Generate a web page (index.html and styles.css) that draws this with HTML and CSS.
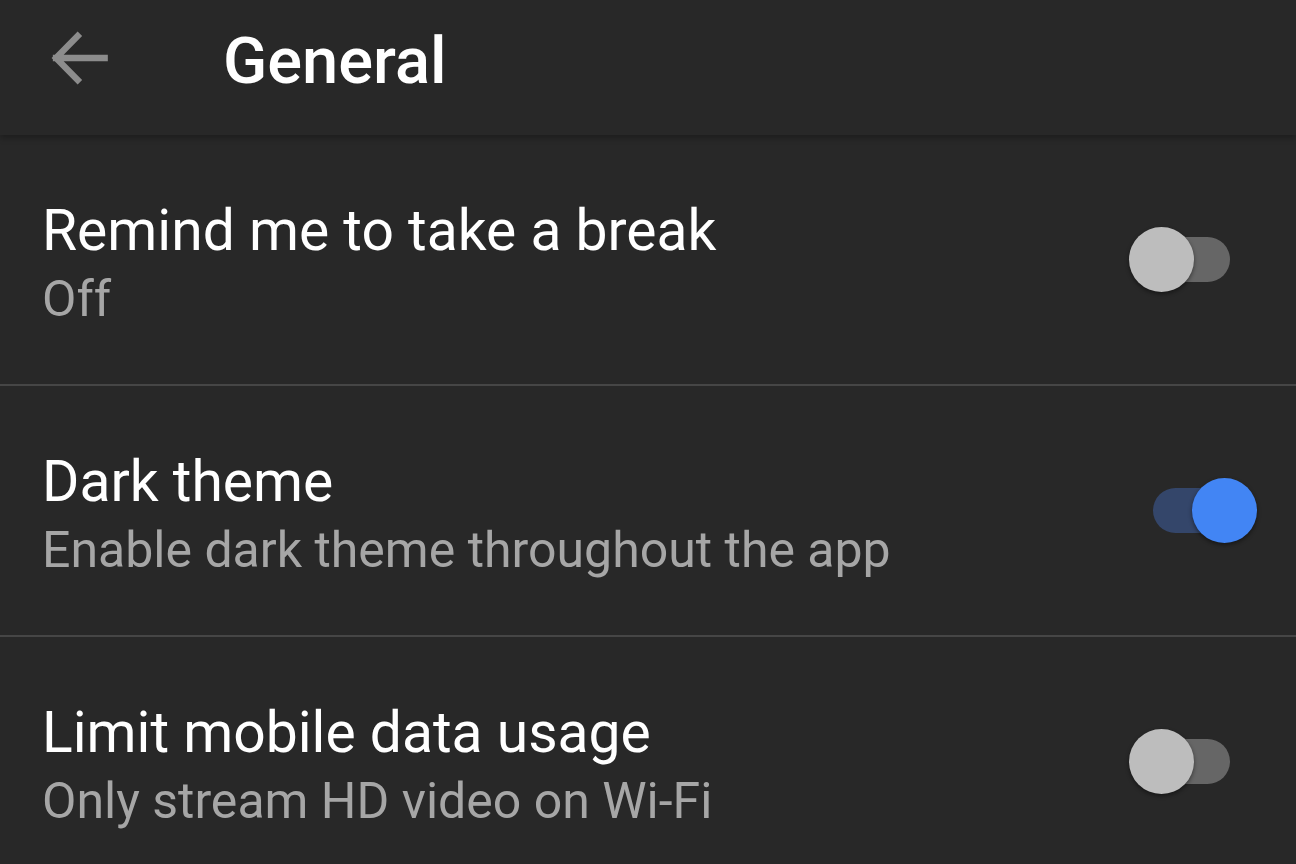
FILE: index.html
```html
<!DOCTYPE html>
<html lang="en">
<head>
    <meta charset="UTF-8">
    <meta name="viewport" content="width=device-width, initial-scale=1.0">
    <title>General</title>
    <link rel="stylesheet" href="styles.css">
</head>
<body>
    <header class="appbar">
        <button class="back-btn" aria-label="Back">
            <svg viewBox="0 0 24 24" width="80" height="80">
                <path d="M19.4 12H4.8M11.3 5.4L4.8 12l6.5 6.6" fill="none" stroke="currentColor" stroke-width="1.9" stroke-linecap="square"/>
            </svg>
        </button>
        <h1 class="appbar-title">General</h1>
    </header>

    <main class="settings">
        <div class="setting">
            <div class="setting-text">
                <div class="setting-title">Remind me to take a break</div>
                <div class="setting-sub">Off</div>
            </div>
            <div class="switch"></div>
        </div>

        <div class="setting">
            <div class="setting-text">
                <div class="setting-title">Dark theme</div>
                <div class="setting-sub">Enable dark theme throughout the app</div>
            </div>
            <div class="switch is-on"></div>
        </div>

        <div class="setting">
            <div class="setting-text">
                <div class="setting-title">Limit mobile data usage</div>
                <div class="setting-sub">Only stream HD video on Wi-Fi</div>
            </div>
            <div class="switch"></div>
        </div>
    </main>
</body>
</html>
```

FILE: styles.css
```css
* {
    margin: 0;
    padding: 0;
    box-sizing: border-box;
}

body {
    font-family: Roboto, 'Noto Sans', sans-serif;
    background: #282828;
    color: #ffffff;
    width: 1296px;
    height: 864px;
    overflow: hidden;
}

.appbar {
    height: 135px;
    display: flex;
    align-items: center;
    background: #282828;
    box-shadow: 0 3px 6px rgba(0, 0, 0, 0.28);
    position: relative;
    z-index: 1;
}

.back-btn {
    background: none;
    border: none;
    color: #8c8c8c;
    margin-left: 40px;
    width: 80px;
    height: 80px;
    display: flex;
    margin-top: -20px;
}

.appbar-title {
    font-size: 65px;
    font-weight: 500;
    margin-left: 103px;
    margin-top: -14px;
}

.setting {
    height: 251px;
    display: flex;
    align-items: center;
    justify-content: space-between;
    padding: 0 40px 0 42px;
    border-bottom: 2px solid #464646;
}

.setting-text {
    display: flex;
    flex-direction: column;
    margin-top: 10px;
}

.setting-title {
    font-size: 57px;
    line-height: 64px;
    color: #ffffff;
}

.setting-sub {
    font-size: 50px;
    line-height: 64px;
    margin-top: 4px;
    color: #a6a6a6;
}

.switch {
    position: relative;
    width: 77px;
    height: 45px;
    border-radius: 23px;
    background: #666666;
    margin-right: 26px;
}

.switch::after {
    content: '';
    position: absolute;
    width: 65px;
    height: 65px;
    border-radius: 50%;
    top: -10px;
    left: -24px;
    background: #bdbdbd;
    box-shadow: 0 2px 4px rgba(0, 0, 0, 0.45);
}

.switch.is-on {
    background: #34466a;
}

.switch.is-on::after {
    left: 39px;
    background: #4285f4;
}
```
